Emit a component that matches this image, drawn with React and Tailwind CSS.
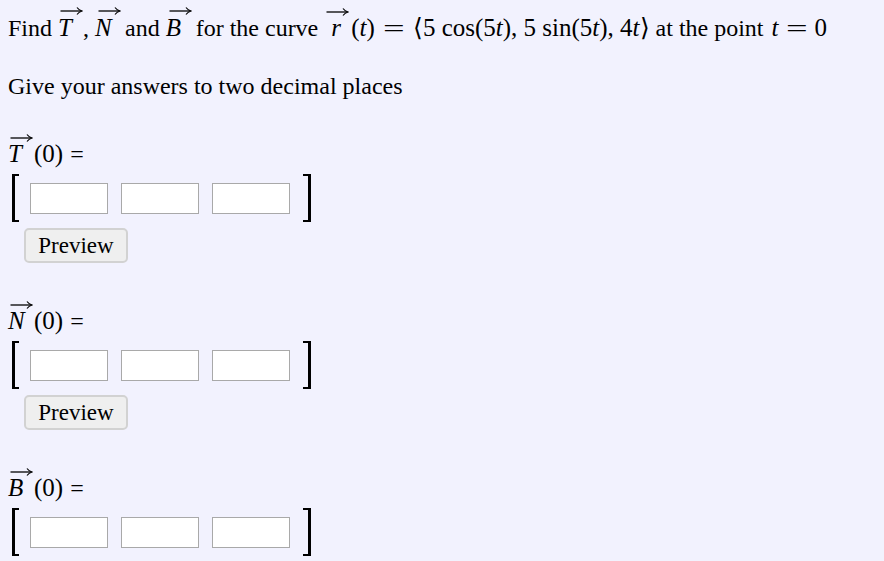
import React from 'react';

const Arrow = ({ className }) => (
  <svg className={className} width="23" height="10" viewBox="0 0 23 10" fill="none">
    <path d="M0.5 5 H21.5" stroke="#000" strokeWidth="1.3" />
    <path d="M17 1.5 Q18.8 4 22 5 Q18.8 6 17 8.5" stroke="#000" strokeWidth="1.2" />
  </svg>
);

const Vec = ({ ch, w = 24, top = '-top-[8px]', left = 'left-[2px]', pad = '' }) => (
  <span className={`relative inline-block italic text-[25px] ${pad}`} style={{ width: w }}>
    {ch}
    <Arrow className={`absolute ${left} ${top}`} />
  </span>
);

const Eq = ({ className = '' }) => (
  <span className={`inline-block w-[22px] text-center ${className}`}>
    <span className="inline-block scale-x-[1.6]">=</span>
  </span>
);

const Bracket = ({ side }) => (
  <div
    className={
      side === 'left'
        ? 'w-[7px] h-[48px] border-l-[3px] border-t-2 border-b-2 border-black'
        : 'w-[8px] h-[48px] border-r-[3px] border-t-2 border-b-2 border-black'
    }
  />
);

const Field = () => (
  <input type="text" className="w-[78px] h-[31px] bg-white border border-[#a9a9a9] outline-none" />
);

const VectorRow = () => (
  <div className="flex items-center h-[48px] mt-[6px]">
    <div className="ml-[4px]">
      <Bracket side="left" />
    </div>
    <div className="flex gap-[13px] ml-[11px]">
      <Field />
      <Field />
      <Field />
    </div>
    <div className="ml-[13px]">
      <Bracket side="right" />
    </div>
  </div>
);

const PreviewButton = () => (
  <button className="mt-[6px] ml-[16px] w-[104px] h-[35px] bg-[#efefef] border-2 border-[#d2d2d2] rounded-[5px] text-[23px] leading-none text-black">
    Preview
  </button>
);

const Block = ({ ch, preview = true, first = false }) => (
  <div className={first ? 'mt-[40px] flex flex-col items-start' : 'mt-[44px] flex flex-col items-start'}>
    <div className="h-[28px] leading-[28px] text-[24px] whitespace-nowrap">
      <Vec ch={ch} w={25} top="-top-[7px]" />
      <span className="ml-[1px] text-[25px]">(0)</span>
      <span className="ml-[7px]">=</span>
    </div>
    <VectorRow />
    {preview && <PreviewButton />}
  </div>
);

export default function App() {
  return (
    <div
      className="min-h-screen bg-[#f2f2fe] text-black px-[8px] pt-[14px]"
      style={{ fontFamily: '"Liberation Serif", "Times New Roman", serif' }}
    >
      <div className="h-[28px] leading-[28px] text-[24px] whitespace-nowrap">
        Find <Vec ch="T" w={25} />, <Vec ch="N" w={24} left="left-[3px]" /> and{' '}
        <Vec ch="B" w={24} left="left-[3px]" /> for the curve
        <span className="ml-[8px]">
          <Vec ch="r" w={23} top="-top-[7px]" left="left-0" pad="pl-[5px]" />
        </span>
        <span className="text-[25px] ml-[2px]">
          (<span className="italic">t</span>)
        </span>
        <Eq className="mx-[8px]" />
        <span className="text-[25px]">
          ⟨5 cos(5<span className="italic">t</span>), 5 sin(5<span className="italic">t</span>), 4
          <span className="italic">t</span>⟩
        </span>{' '}
        at the point <span className="italic text-[25px] ml-[2px]">t</span>
        <Eq className="mx-[7px]" />
        <span className="text-[25px]">0</span>
      </div>

      <div className="mt-[30px] h-[28px] leading-[28px] text-[24px]">Give your answers to two decimal places</div>

      <Block ch="T" first />
      <Block ch="N" />
      <Block ch="B" preview={false} />
    </div>
  );
}
